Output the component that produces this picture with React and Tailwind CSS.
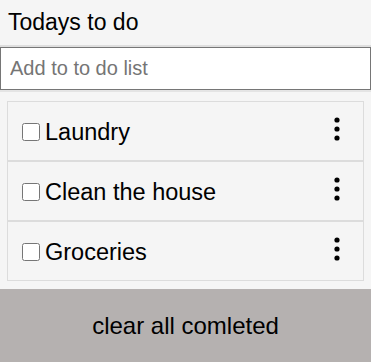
import React, { useState } from "react";

const todos = ["Laundry", "Clean the house", "Groceries"];

const Kebab = () => (
  <svg width="8" height="24" viewBox="0 0 8 24" className="block">
    <circle cx="4" cy="3" r="2.6" fill="#000" />
    <circle cx="4" cy="12" r="2.6" fill="#000" />
    <circle cx="4" cy="21" r="2.6" fill="#000" />
  </svg>
);

const App = () => {
  const [text, setText] = useState("");

  return (
    <div className="w-[371px] h-[362px] bg-[#f5f5f5] flex flex-col font-['Liberation_Sans',Arial,sans-serif] text-black">
      <div className="h-[47px] px-2 flex items-center text-[23px] border-b-2 border-[#dedede]">
        Todays to do
      </div>
      <div className="border-b-2 border-[#e4e4e4]">
        <input
          className="w-full h-[43px] bg-white border border-[#767676] px-[9px] text-[20px] outline-none placeholder:text-[#757575]"
          placeholder="Add to to do list"
          value={text}
          onChange={(e) => setText(e.target.value)}
        />
      </div>
      <div className="mx-[7px] mt-[9px] border border-[#dcdcdc]">
        {todos.map((t, i) => (
          <div
            key={t}
            className={`flex items-center pl-[14px] pr-[22px] ${
              i < todos.length - 1 ? "h-[60px] border-b-2 border-[#dcdcdc]" : "h-[58px]"
            }`}
          >
            <input type="checkbox" className="shrink-0 w-[18px] h-[18px] m-0 mr-[5px] mt-[2px]" />
            <span className="text-[23.5px] flex-1 pt-[3px]">{t}</span>
            <div className="-mt-[4px]">
              <Kebab />
            </div>
          </div>
        ))}
      </div>
      <button className="mt-auto h-[73px] w-full bg-[#b5b1b0] text-[24px] pt-[1px]">
        clear all comleted
      </button>
    </div>
  );
};

export default App;
